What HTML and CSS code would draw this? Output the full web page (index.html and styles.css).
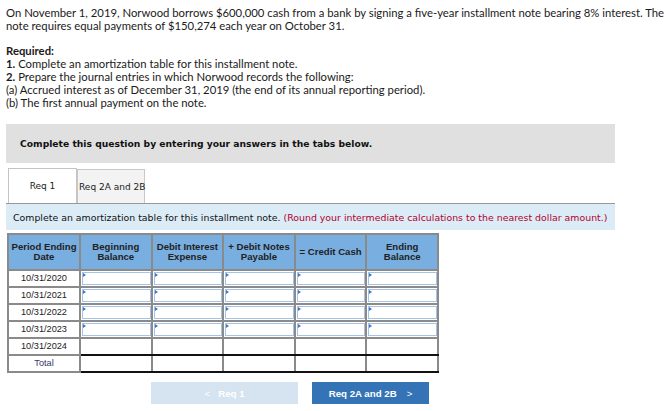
FILE: index.html
```html
<!DOCTYPE html>
<html>
<head>
<meta charset="utf-8">
<link rel="stylesheet" href="styles.css">
</head>
<body>
<div class="page">
  <p class="intro">On November 1, 2019, Norwood borrows $600,000 cash from a bank by signing a five-year installment note bearing 8% interest. The note requires equal payments of $150,274 each year on October 31.</p>
  <div class="req">
    <div><b>Required:</b></div>
    <div><b>1.</b> Complete an amortization table for this installment note.</div>
    <div><b>2.</b> Prepare the journal entries in which Norwood records the following:</div>
    <div>(a) Accrued interest as of December 31, 2019 (the end of its annual reporting period).</div>
    <div>(b) The first annual payment on the note.</div>
  </div>
  <div class="graybox">Complete this question by entering your answers in the tabs below.</div>
  <div class="tabs">
    <div class="tab active">Req 1</div>
    <div class="tab">Req 2A and 2B</div>
  </div>
  <div class="band">Complete an amortization table for this installment note. <span class="red">(Round your intermediate calculations to the nearest dollar amount.)</span></div>
  <table class="amort">
    <colgroup>
      <col class="c1"><col class="c2"><col class="c3"><col class="c4"><col class="c5"><col class="c6">
    </colgroup>
    <thead>
      <tr>
        <th>Period Ending<br>Date</th>
        <th>Beginning<br>Balance</th>
        <th>Debit Interest<br>Expense</th>
        <th>+ Debit Notes<br>Payable</th>
        <th>= Credit Cash</th>
        <th>Ending<br>Balance</th>
      </tr>
    </thead>
    <tbody>
      <tr><td class="date">10/31/2020</td><td><div class="inp"></div></td><td><div class="inp"></div></td><td><div class="inp"></div></td><td><div class="inp"></div></td><td><div class="inp"></div></td></tr>
      <tr><td class="date">10/31/2021</td><td><div class="inp"></div></td><td><div class="inp"></div></td><td><div class="inp"></div></td><td><div class="inp"></div></td><td><div class="inp"></div></td></tr>
      <tr><td class="date">10/31/2022</td><td><div class="inp"></div></td><td><div class="inp"></div></td><td><div class="inp"></div></td><td><div class="inp"></div></td><td><div class="inp"></div></td></tr>
      <tr><td class="date">10/31/2023</td><td><div class="inp"></div></td><td><div class="inp"></div></td><td><div class="inp"></div></td><td><div class="inp"></div></td><td><div class="inp"></div></td></tr>
      <tr class="last"><td class="date">10/31/2024</td><td></td><td></td><td></td><td></td><td></td></tr>
      <tr class="total"><td class="date">Total</td><td></td><td></td><td></td><td></td><td></td></tr>
    </tbody>
  </table>
  <div class="nav">
    <div class="btn prev"><span class="chev">&lt;</span> Req 1</div>
    <div class="btn next">Req 2A and 2B <span class="chev">&gt;</span></div>
  </div>
</div>
</body>
</html>
```
FILE: styles.css
```css
html, body { margin: 0; padding: 0; background: #fff; }
.page { padding: 6px 0 0 6px; font-family: "Lato", "Liberation Sans", sans-serif; color: #1a1a1a; }
.intro { margin: 0; font-size: 11.3px; line-height: 13px; width: 664px; }
.req { margin-top: 12px; font-size: 11.3px; line-height: 13px; }
.graybox {
  margin-top: 15px; width: 609px; height: 39px; box-sizing: border-box;
  background: #e0e0e0; padding: 0 0 0 14px; display: flex; align-items: center;
  font-family: "DejaVu Sans", sans-serif; font-weight: bold; font-size: 9.2px; color: #111;
}
.tabs { display: flex; margin-top: 5px; height: 35px; align-items: flex-end; padding-left: 2px; }
.tab {
  font-family: "DejaVu Sans", sans-serif; font-size: 9px; color: #222;
  box-sizing: border-box; display: flex; align-items: center;
}
.tab.active { width: 69px; height: 35px; border: 1px solid #c4c4c4; border-bottom: none; background: #fff; justify-content: center; }
.tab:not(.active) { width: 68px; height: 34px; border: 1px solid #c8c8c8; border-bottom: none; background: #f3f3f3; padding-left: 1px; white-space: nowrap; }
.band {
  width: 609px; box-sizing: border-box; height: 27px; border-top: 1px solid #999;
  background: #dcecf7; padding-left: 7px; display: flex; align-items: center; white-space: pre;
  font-family: "DejaVu Sans", sans-serif; font-size: 9.4px; color: #111;
}
.band .red { color: #b3002d; }
.amort {
  margin-top: 3px; margin-left: 1px; border-collapse: collapse; table-layout: fixed;
  width: 430px; font-family: "Liberation Sans", Arial, sans-serif; font-size: 9.2px; color: #222;
}
.amort col.c1 { width: 72px; }
.amort col.c2, .amort col.c3, .amort col.c4, .amort col.c5, .amort col.c6 { width: 71.6px; }
.amort th, .amort td { border: 2px solid #8a8a8a; padding: 0; }
.amort th { background: #78aee0; height: 34px; font-weight: bold; font-size: 9.6px; line-height: 10px; text-align: center; color: #222; }
.amort td { height: 15px; background: #fff; }
.amort td.date { text-align: center; line-height: 13px; }
.amort tr.last td:not(.date) { border-bottom-color: #111; }
.amort tr.total td:not(.date) { border-bottom-color: #111; }
.amort tr.total td.date { color: #3b3470; }
.inp {
  position: relative; height: 13px; margin: 0 0 0 1px; border: 1px solid #a6c3e6; box-sizing: border-box;
  background: #fff;
}
.inp::before {
  content: ""; position: absolute; left: 0; top: 0; width: 0; height: 0;
  border-top: 2px solid transparent; border-bottom: 2px solid transparent; border-left: 3px solid #3d78c0;
}
.nav { display: flex; margin-top: 9px; padding-left: 145px; gap: 14px; }
.btn {
  height: 22px; display: flex; align-items: center; justify-content: center;
  font-family: "Liberation Sans", Arial, sans-serif; font-weight: bold; font-size: 9.7px; color: #fff;
}
.btn.prev { width: 147px; background: #d6e3f1; }
.btn.prev .chev { margin-right: 8px; font-weight: normal; }
.btn.next { width: 117px; background: #3473b5; }
.btn.next .chev { margin-left: 10px; font-weight: normal; }
```
